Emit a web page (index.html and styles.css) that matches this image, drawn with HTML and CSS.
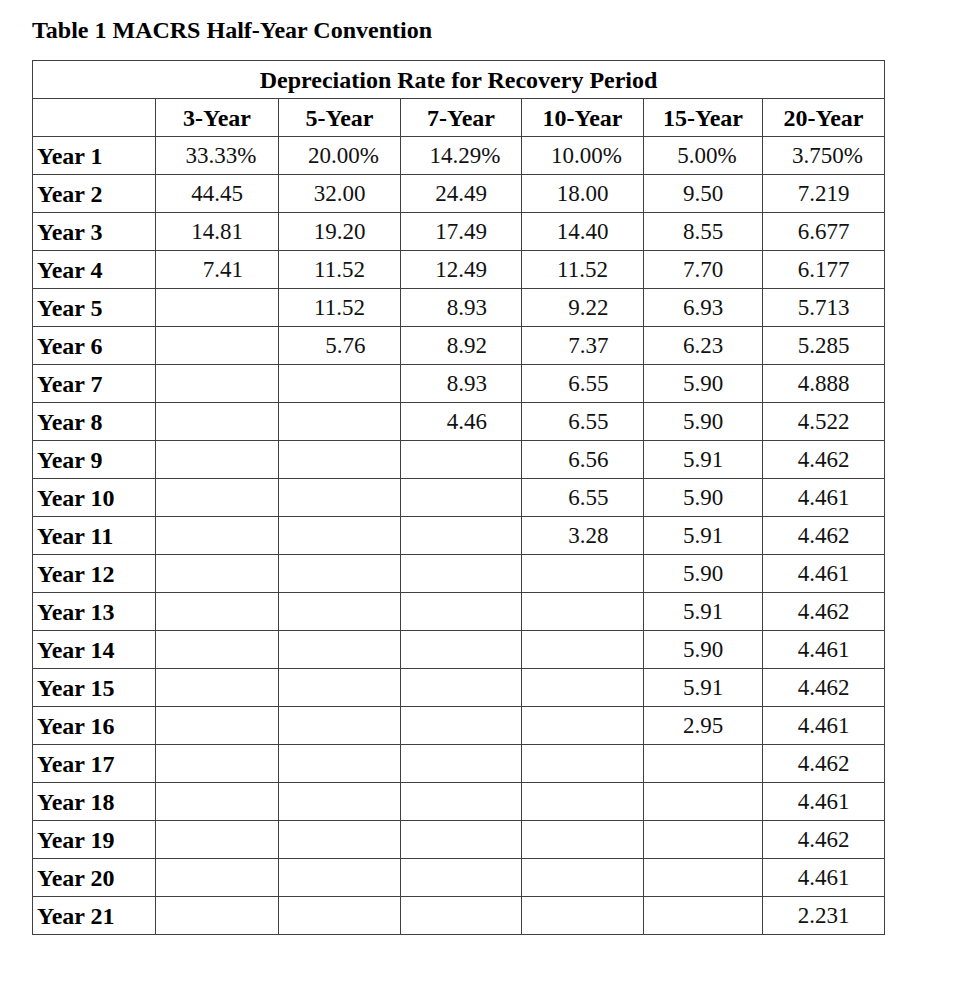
FILE: index.html
```html
<!DOCTYPE html>
<html>
<head>
<meta charset="utf-8">
<link rel="stylesheet" href="styles.css">
</head>
<body>
<div class="title">Table 1 MACRS Half-Year Convention</div>
<table class="macrs">
<colgroup>
<col class="c0"><col class="c1"><col class="c2"><col class="c3"><col class="c4"><col class="c5"><col class="c6">
</colgroup>
<tr><th colspan="7">Depreciation Rate for Recovery Period</th></tr>
<tr><th></th><th>3-Year</th><th>5-Year</th><th>7-Year</th><th>10-Year</th><th>15-Year</th><th>20-Year</th></tr>
<tr class="pct"><th class="yr">Year 1</th><td>33.33%</td><td>20.00%</td><td>14.29%</td><td>10.00%</td><td>5.00%</td><td>3.750%</td></tr>
<tr><th class="yr">Year 2</th><td>44.45</td><td>32.00</td><td>24.49</td><td>18.00</td><td>9.50</td><td>7.219</td></tr>
<tr><th class="yr">Year 3</th><td>14.81</td><td>19.20</td><td>17.49</td><td>14.40</td><td>8.55</td><td>6.677</td></tr>
<tr><th class="yr">Year 4</th><td class="s">7.41</td><td>11.52</td><td>12.49</td><td>11.52</td><td>7.70</td><td>6.177</td></tr>
<tr><th class="yr">Year 5</th><td></td><td>11.52</td><td class="s">8.93</td><td class="s">9.22</td><td>6.93</td><td>5.713</td></tr>
<tr><th class="yr">Year 6</th><td></td><td class="s">5.76</td><td class="s">8.92</td><td class="s">7.37</td><td>6.23</td><td>5.285</td></tr>
<tr><th class="yr">Year 7</th><td></td><td></td><td class="s">8.93</td><td class="s">6.55</td><td>5.90</td><td>4.888</td></tr>
<tr><th class="yr">Year 8</th><td></td><td></td><td class="s">4.46</td><td class="s">6.55</td><td>5.90</td><td>4.522</td></tr>
<tr><th class="yr">Year 9</th><td></td><td></td><td></td><td class="s">6.56</td><td>5.91</td><td>4.462</td></tr>
<tr><th class="yr">Year 10</th><td></td><td></td><td></td><td class="s">6.55</td><td>5.90</td><td>4.461</td></tr>
<tr><th class="yr">Year 11</th><td></td><td></td><td></td><td class="s">3.28</td><td>5.91</td><td>4.462</td></tr>
<tr><th class="yr">Year 12</th><td></td><td></td><td></td><td></td><td>5.90</td><td>4.461</td></tr>
<tr><th class="yr">Year 13</th><td></td><td></td><td></td><td></td><td>5.91</td><td>4.462</td></tr>
<tr><th class="yr">Year 14</th><td></td><td></td><td></td><td></td><td>5.90</td><td>4.461</td></tr>
<tr><th class="yr">Year 15</th><td></td><td></td><td></td><td></td><td>5.91</td><td>4.462</td></tr>
<tr><th class="yr">Year 16</th><td></td><td></td><td></td><td></td><td>2.95</td><td>4.461</td></tr>
<tr><th class="yr">Year 17</th><td></td><td></td><td></td><td></td><td></td><td>4.462</td></tr>
<tr><th class="yr">Year 18</th><td></td><td></td><td></td><td></td><td></td><td>4.461</td></tr>
<tr><th class="yr">Year 19</th><td></td><td></td><td></td><td></td><td></td><td>4.462</td></tr>
<tr><th class="yr">Year 20</th><td></td><td></td><td></td><td></td><td></td><td>4.461</td></tr>
<tr><th class="yr">Year 21</th><td></td><td></td><td></td><td></td><td></td><td>2.231</td></tr>
</table>
</body>
</html>
```
FILE: styles.css
```css
html, body {
  margin: 0;
  padding: 0;
  background: #fff;
}
body {
  padding: 15px 0 0 32px;
  font-family: "Liberation Serif", "Times New Roman", serif;
  color: #000;
}
.title {
  font-weight: bold;
  font-size: 24px;
  line-height: 30px;
  margin-bottom: 15px;
}
.macrs {
  border-collapse: collapse;
  table-layout: fixed;
  width: 852px;
  font-size: 23px;
}
.c0 { width: 123px; }
.c1 { width: 123px; }
.c2 { width: 122px; }
.c3 { width: 121px; }
.c4 { width: 122px; }
.c5 { width: 119px; }
.c6 { width: 122px; }
.macrs th, .macrs td {
  border: 1px solid #404040;
  height: 37px;
  padding: 0;
  vertical-align: middle;
  text-align: center;
  line-height: 26px;
}
.macrs th {
  font-weight: bold;
  font-size: 24px;
}
.macrs td {
  font-weight: normal;
  color: #111;
}
.macrs th.yr {
  text-align: left;
  padding-left: 4px;
}
.macrs .pct td {
  padding-left: 8px;
}
.macrs td.s {
  padding-left: 11.5px;
}
```
